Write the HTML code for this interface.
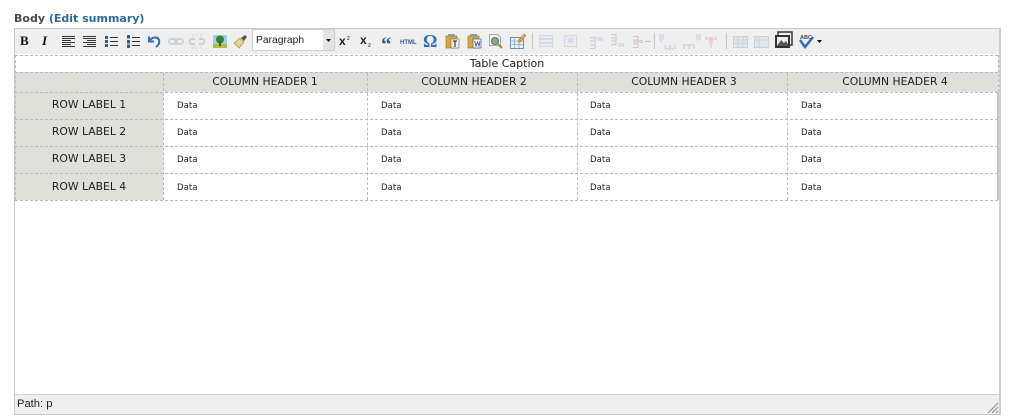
<!DOCTYPE html>
<html><head><meta charset="utf-8">
<style>
html,body{margin:0;padding:0;background:#fff;width:1024px;height:419px;overflow:hidden}
body{position:relative;font-family:"DejaVu Sans","Liberation Sans",sans-serif;color:#222;filter:blur(.3px)}
.a{position:absolute}
.t{position:absolute;white-space:nowrap;text-align:center;font-size:10.8px;line-height:14px;color:#1c1c1c}
.d{position:absolute;white-space:nowrap;font-size:8.6px;line-height:12px;color:#222}
.h{border-top:1px dashed #bbb;height:0;position:absolute}
.v{border-left:1px dashed #bbb;width:0;position:absolute}
</style></head><body>
<div class="a" style="left:14px;top:12px;font-size:11px;line-height:14px;font-weight:bold;color:#4a4a4a;white-space:nowrap">Body <span style="color:#2a6a9e">(Edit summary)</span></div>

<div class="a" style="left:14px;top:28px;width:984px;height:385px;border:1px solid #c9c9c9;border-right:2px solid #cfcfcf;background:#fff"></div>
<div class="a" style="left:15px;top:29px;width:984px;height:25px;background:#efefef"></div>

<svg class="a" style="left:15px;top:29px" width="984" height="25" viewBox="0 0 984 25">
 <!-- B I -->
 <text x="5" y="16" font-family="Liberation Serif" font-weight="bold" font-size="13" fill="#111">B</text>
 <text x="27" y="16" font-family="Liberation Serif" font-weight="bold" font-style="italic" font-size="13" fill="#111">I</text>
 <!-- align -->
 <g stroke="#333" stroke-width="1">
  <path d="M47 7.500h13M47 9.500h13M47 11.500h9M47 13.500h13M47 15.500h9M47 17.500h13" />
  <path d="M68 7.500h13M68 9.500h13M72 11.500h9M68 13.500h13M72 15.500h9M68 17.500h13" />
  <path d="M95 8.500h8M95 12.500h8M95 16.500h8M117 8.500h8M117 12.500h8M117 16.500h8"/>
 </g>
 <g fill="#2d5f9e">
  <rect x="90" y="7" width="3" height="3"/><rect x="90" y="11" width="3" height="3"/><rect x="90" y="15" width="3" height="3"/>
  <rect x="112" y="6" width="3" height="3.500"/><rect x="112" y="11" width="3" height="3.500"/><rect x="112" y="15.500" width="3" height="3.500"/>
 </g>
 <!-- undo -->
 <path d="M134 7.500v5h5M134.500 12c2-4 8-5 9.500-1 1 3-1 5.500-3 7" fill="none" stroke="#2f6fb5" stroke-width="2"/>
 <!-- link / unlink disabled -->
 <g fill="none" stroke="#ccd1d8" stroke-width="2">
  <rect x="154" y="10" width="8" height="5" rx="2.500"/><rect x="160" y="10" width="8" height="5" rx="2.500"/>
  <path d="M180 10h-3a2.500 2.500 0 0 0 0 5h3M184 10h3a2.500 2.500 0 0 1 0 5h-3"/>
 </g>
 <path d="M177 5l2 3M187 5l-2 3M177 20l2-3M187 20l-2-3M182 4v3M182 18v3" stroke="#d4d8dd" stroke-width="1"/>
 <!-- image tree -->
 <rect x="198" y="6" width="14" height="13" fill="#a3cdec"/>
 <rect x="198" y="15" width="14" height="4" fill="#a9c23c"/>
 <circle cx="205" cy="10.500" r="4" fill="#2f8a2b"/><rect x="204" y="12" width="2" height="5" fill="#6b4a1f"/>
 <!-- brush -->
 <path d="M219 14l6-5 4 4-5 6z" fill="#e8d488" stroke="#9a8a50" stroke-width=".6"/>
 <path d="M226 9l4-3 2 2-3 4z" fill="#555"/>
 <!-- select -->
 <rect x="237.500" y="0.500" width="82" height="21" fill="#e4e4e4" stroke="#cfcfcf"/>
 <rect x="238" y="1" width="70" height="20" fill="#fff"/>
 <path d="M311 10h5l-2.500 3z" fill="#111"/>
 <!-- sup sub -->
 <text x="324" y="16" font-family="Liberation Sans" font-weight="bold" font-size="12" fill="#222">x</text>
 <text x="332" y="11" font-family="Liberation Sans" font-weight="bold" font-size="5" fill="#2d5f9e">2</text>
 <text x="345" y="15" font-family="Liberation Sans" font-weight="bold" font-size="12" fill="#222">x</text>
 <text x="353" y="18" font-family="Liberation Sans" font-weight="bold" font-size="5" fill="#2d5f9e">2</text>
 <!-- quote -->
 <text x="366" y="22" font-family="Liberation Serif" font-weight="bold" font-size="21" fill="#2d5f9e">“</text>
 <text x="385" y="15" font-family="Liberation Sans" font-weight="bold" font-size="6" fill="#2d5f9e">HTML</text>
 <text x="408" y="18" font-family="Liberation Serif" font-weight="bold" font-size="18" fill="#2f6fb5">Ω</text>
 <!-- paste -->
 <rect x="431" y="7" width="11" height="12" fill="#d9a83a" stroke="#8a6a20" stroke-width=".6"/><rect x="433" y="5" width="7" height="3" fill="#999"/>
 <rect x="436" y="10" width="8" height="9" fill="#eee" stroke="#666" stroke-width=".6"/><path d="M438 12h4M440 12v6" stroke="#222"/>
 <rect x="453" y="7" width="11" height="12" fill="#d9a83a" stroke="#8a6a20" stroke-width=".6"/><rect x="455" y="5" width="7" height="3" fill="#999"/>
 <rect x="458" y="10" width="8" height="9" fill="#eef" stroke="#26559c" stroke-width=".6"/><path d="M459.500 12l1.500 5 1.500-4 1.500 4 1-5" stroke="#26559c" fill="none" stroke-width=".8"/>
 <!-- find -->
 <path d="M474.500 5.500h8l3 3v8h-11z" fill="#f4f4f4" stroke="#aaa"/>
 <circle cx="480" cy="12" r="3.500" fill="#7fb07f" stroke="#667"/>
 <path d="M483 15l4 4" stroke="#b08a3a" stroke-width="2"/>
 <!-- table edit -->
 <rect x="495.500" y="8.500" width="13" height="11" fill="#e9f0f8" stroke="#6e8fb5"/><path d="M495 12h13M495 15.500h13M499.500 8v11M504 8v11" stroke="#8aa6c8" stroke-width=".8"/>
 <path d="M503 12l6-7 2 1.500-6 7z" fill="#e8a040" stroke="#a0602a" stroke-width=".5"/>
 <!-- sep -->
 <path d="M517.500 4v16M639.500 4v16M711.500 4v16" stroke="#c8c8c8"/>
 <!-- disabled table -->
 <g fill="#e9ebee" stroke="#d4d7dc">
  <rect x="524.500" y="6.500" width="13" height="11"/><rect x="549.500" y="6.500" width="12" height="11"/>
 </g>
 <path d="M525 10h12M525 14h12" stroke="#ccd6e4" stroke-width="1.500"/>
 <rect x="553" y="9" width="5" height="5" fill="#d5dce7"/>
 <g stroke="#cbcbcb" fill="none">
  <path d="M575 8.500h5v11h-5M575 12h5M575 16h5"/>
  <path d="M596 5.500h5v10h-5M596 9h5M596 12h5"/>
  <path d="M618 7.500h5v11h-5M618 11h5M618 15h5"/>
  <path d="M646 7v6M650 16v4h10v-4M655 16v4"/>
  <path d="M669 20v-4h10v4M674 16v4M683 7v5"/>
  <path d="M691 7v3h10v-3M696 10v9"/>
 </g>
 <rect x="582" y="8" width="6" height="4" fill="#d5e0ee"/><rect x="603" y="14" width="6" height="4" fill="#d5e0ee"/><rect x="618" y="11" width="10" height="3" fill="#f0cccc"/><path d="M630 12.500h6" stroke="#c4c4c4"/>
 <rect x="644" y="5" width="5" height="6" fill="#d5e0ee"/><rect x="681" y="5" width="5" height="6" fill="#d5e0ee"/><rect x="694" y="8" width="4" height="6" fill="#f0cccc"/>
 <g fill="#dfe6f0" stroke="#ccd1d9">
  <rect x="718.500" y="7.500" width="14" height="11"/><rect x="739.500" y="7.500" width="14" height="11"/>
 </g>
 <path d="M719 11h13M719 14.500h13M723 8v10M728 8v10" stroke="#c9ced8" stroke-width=".8"/>
 <path d="M740 11h13M744 8v10" stroke="#c9ced8" stroke-width=".8"/>
 <!-- image dark -->
 <rect x="760" y="6" width="15" height="13" fill="#333"/><rect x="763" y="3" width="14" height="13" fill="none" stroke="#333" stroke-width="1.500"/>
 <rect x="762" y="8" width="11" height="9" fill="#ececec"/>
 <path d="M762 17l4-6 3 3 2-2 3 5z" fill="#555"/>
 <!-- spell -->
 <text x="785" y="10" font-family="Liberation Sans" font-weight="bold" font-size="5.500" fill="#444">ABC</text>
 <path d="M785 11l5 7 8-10" fill="none" stroke="#2d6fbf" stroke-width="2.500"/>
 <path d="M802 11h5l-2.500 3z" fill="#111"/>
</svg>
<div class="a" style="left:256px;top:34px;font-family:'Liberation Sans',sans-serif;font-size:10.300px;line-height:14px;color:#222">Paragraph</div>

<!-- table -->
<div class="a" style="left:15px;top:72px;width:983px;height:20px;background:#e0e0da"></div>
<div class="a" style="left:15px;top:92px;width:148px;height:108px;background:#e0e0da"></div>
<div class="a" style="left:997px;top:92px;width:2px;height:108px;background:#c8c8c2"></div>
<div class="h" style="left:15px;top:55px;width:983px"></div>
<div class="h" style="left:15px;top:72px;width:983px"></div>
<div class="h" style="left:15px;top:92px;width:983px"></div>
<div class="h" style="left:15px;top:119px;width:983px"></div>
<div class="h" style="left:15px;top:146px;width:983px"></div>
<div class="h" style="left:15px;top:173px;width:983px"></div>
<div class="h" style="left:15px;top:200px;width:983px"></div>
<div class="v" style="left:15px;top:55px;height:145px"></div>
<div class="v" style="left:163px;top:73px;height:127px"></div>
<div class="v" style="left:367px;top:73px;height:127px"></div>
<div class="v" style="left:577px;top:73px;height:127px"></div>
<div class="v" style="left:787px;top:73px;height:127px"></div>
<div class="v" style="left:998px;top:55px;height:37px"></div>

<div class="t" style="left:407px;top:57px;width:200px;font-size:11px">Table Caption</div>
<div class="t" style="left:165px;top:75px;width:200px">COLUMN HEADER 1</div>
<div class="t" style="left:374px;top:75px;width:200px">COLUMN HEADER 2</div>
<div class="t" style="left:584px;top:75px;width:200px">COLUMN HEADER 3</div>
<div class="t" style="left:795px;top:75px;width:200px">COLUMN HEADER 4</div>
<div class="t" style="left:15px;top:98px;width:148px">ROW LABEL 1</div>
<div class="t" style="left:15px;top:125px;width:148px">ROW LABEL 2</div>
<div class="t" style="left:15px;top:152px;width:148px">ROW LABEL 3</div>
<div class="t" style="left:15px;top:180px;width:148px">ROW LABEL 4</div>

<div class="d" style="left:177px;top:100px">Data</div><div class="d" style="left:381px;top:100px">Data</div><div class="d" style="left:590px;top:100px">Data</div><div class="d" style="left:801px;top:100px">Data</div>
<div class="d" style="left:177px;top:127px">Data</div><div class="d" style="left:381px;top:127px">Data</div><div class="d" style="left:590px;top:127px">Data</div><div class="d" style="left:801px;top:127px">Data</div>
<div class="d" style="left:177px;top:154px">Data</div><div class="d" style="left:381px;top:154px">Data</div><div class="d" style="left:590px;top:154px">Data</div><div class="d" style="left:801px;top:154px">Data</div>
<div class="d" style="left:177px;top:182px">Data</div><div class="d" style="left:381px;top:182px">Data</div><div class="d" style="left:590px;top:182px">Data</div><div class="d" style="left:801px;top:182px">Data</div>

<!-- status bar -->
<div class="a" style="left:15px;top:394px;width:984px;height:19px;background:#efefef;border-top:1px solid #d2d2d2"></div>
<div class="a" style="left:17px;top:397px;font-family:'Liberation Sans',sans-serif;font-size:11.200px;line-height:14px;color:#222">Path: p</div>
<svg class="a" style="left:987px;top:402px" width="12" height="12" viewBox="0 0 12 12"><path d="M1 11L11 1M5 11l6-6M9 11l2-2" stroke="#888" stroke-width="1" fill="none"/></svg>
</body></html>
